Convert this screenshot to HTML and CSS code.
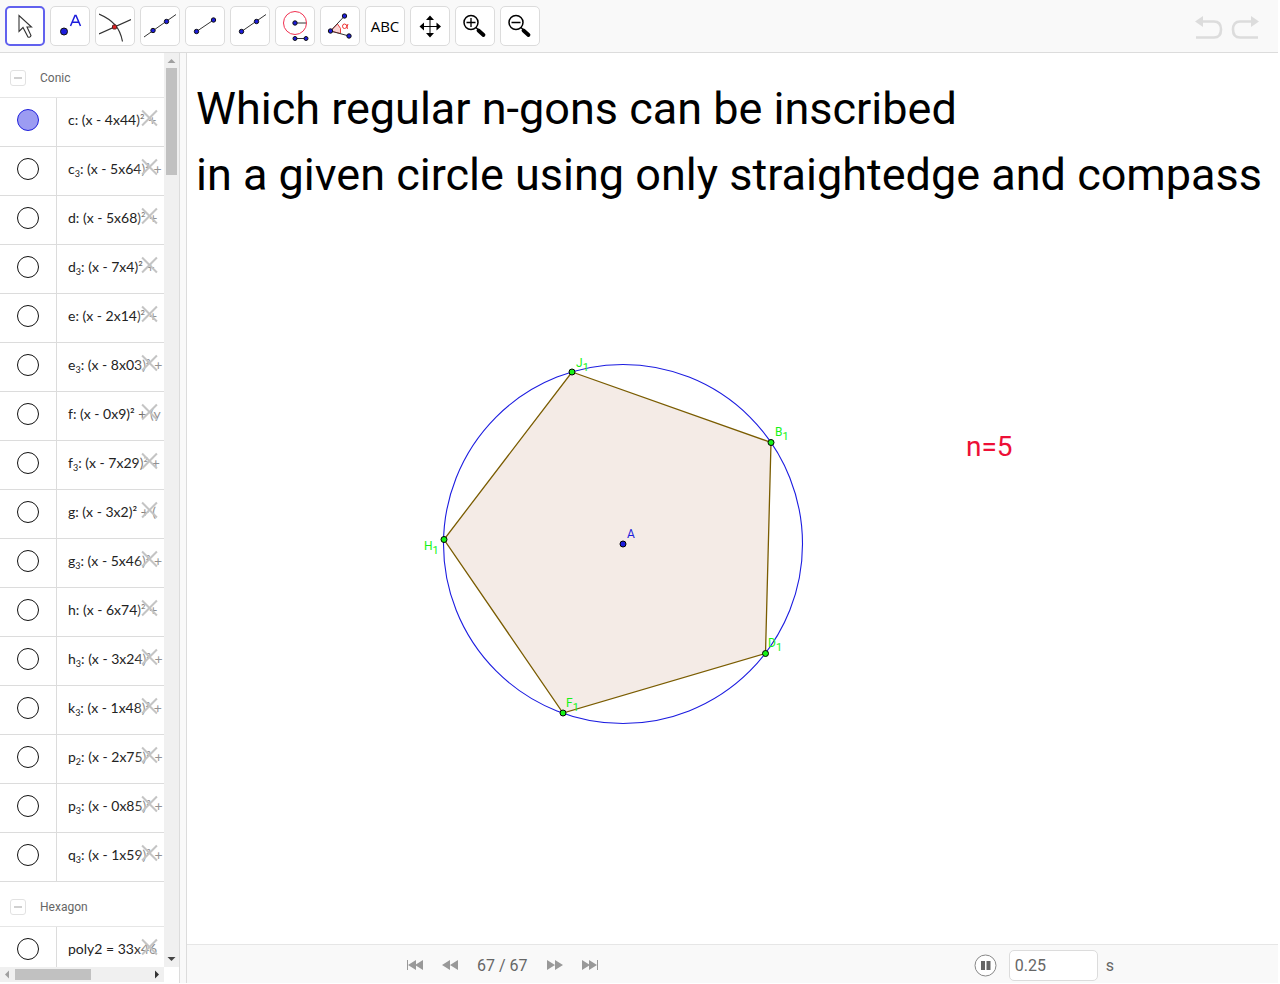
FILE: index.html
```html
<!DOCTYPE html>
<html lang="en">
<head>
<meta charset="utf-8">
<title>Regular n-gons</title>
<link rel="stylesheet" href="styles.css">
</head>
<body>
<div class="app">
  <header class="toolbar">
    <div class="tools">
      <button class="tool selected" aria-label="Move"><svg viewBox="0 0 32 32"><path d="M10 5.500v16l4-4 5 9.500q2 1 3-1.500l-4-8.500h4.500z" fill="#fff" stroke="#333" stroke-width="1.100"/></svg></button>
      <button class="tool" aria-label="Point"><svg viewBox="0 0 32 32"><path d="M16.500 16 21 5.500h1L26.500 16M18.200 12.300h6.600" fill="none" stroke="#1c1cdc" stroke-width="1.500"/><circle class="dot" cx="10" cy="21.500" r="3.500"/></svg></button>
      <button class="tool" aria-label="Intersect"><svg viewBox="0 0 32 32"><path class="ln" d="M0 24 32 9.500M0 4C14 10 21 18 23.500 31.500" stroke-width="1.200"/><rect x="13.500" y="15" width="4" height="4" rx="1" fill="#e02020" stroke="#522"/></svg></button>
      <button class="tool" aria-label="Line"><svg viewBox="0 0 32 32"><path class="ln" d="M0 27 32 4.500"/><circle class="dot" cx="9" cy="20.500" r="2.200"/><circle class="dot" cx="22.500" cy="11.500" r="2.200"/></svg></button>
      <button class="tool" aria-label="Segment"><svg viewBox="0 0 32 32"><path class="ln" d="M7.500 21.500 24.500 10"/><circle class="dot" cx="7.500" cy="21.500" r="2.200"/><circle class="dot" cx="24.500" cy="10" r="2.200"/></svg></button>
      <button class="tool" aria-label="Ray"><svg viewBox="0 0 32 32"><path class="ln" d="M7.500 21.500 32 4.500"/><circle class="dot" cx="7.500" cy="21.500" r="2.200"/><circle class="dot" cx="22.500" cy="11.500" r="2.200"/></svg></button>
      <button class="tool" aria-label="Compass"><svg viewBox="0 0 32 32"><circle cx="16" cy="13" r="11.500" fill="none" stroke="#f03050"/><path class="ln" d="M16 13h11M16 28.500h11"/><circle class="dot" cx="16" cy="13" r="2.200"/><circle class="dot" cx="16" cy="28.500" r="2"/><circle class="dot" cx="27" cy="28.500" r="2"/></svg></button>
      <button class="tool" aria-label="Angle"><svg viewBox="0 0 32 32"><path d="m6.500 21 7-7q4.500 4 3 9.500z" fill="#fbd5d5" stroke="#e44"/><path class="ln" d="M20.500 6 6.500 21l18.500 5"/><circle class="dot" cx="20.500" cy="6" r="2.200"/><circle class="dot" cx="6.500" cy="21" r="2.200"/><circle class="dot" cx="25" cy="26" r="2.200"/><path d="M24 14q-1 5-3.500 4.500-2 0-2-2.300 0-2.200 2-2.200 2.500 0 2.500 3 0 2 1 1.500" fill="none" stroke="#e33"/></svg></button>
      <button class="tool" aria-label="Text"><span class="abc">ABC</span></button>
      <button class="tool" aria-label="Move view"><svg viewBox="0 0 32 32"><path d="M16 8v17M8 16.500h17" stroke="#000"/><path d="m16 5.500 4 4.500h-8zM16 27.500l4-4.500h-8zM5.500 16.500l4.500-4v8zM27 16.500l-4.500-4v8z"/></svg></button>
      <button class="tool" aria-label="Zoom in"><svg viewBox="0 0 32 32"><circle cx="12" cy="12.500" r="7" fill="none" stroke="#000" stroke-width="1.500"/><path d="M7.500 12.500h9M12 8v9M17 17.500l3 3" fill="none" stroke="#000" stroke-width="1.300"/><path d="m19.500 20.500 5 4.500" stroke="#000" stroke-width="3.800" stroke-linecap="round"/></svg></button>
      <button class="tool" aria-label="Zoom out"><svg viewBox="0 0 32 32"><circle cx="12" cy="12.500" r="7" fill="none" stroke="#000" stroke-width="1.500"/><path d="M7.500 12.500h9M17 17.500l3 3" fill="none" stroke="#000" stroke-width="1.300"/><path d="m19.500 20.500 5 4.500" stroke="#000" stroke-width="3.800" stroke-linecap="round"/></svg></button>
    </div>
    <div class="history">
      <button class="plain" aria-label="Undo"><svg width="28" height="24" viewBox="0 0 28 24"><path d="M7 6.500h12q7 0 7 8t-7 8H1" fill="none" stroke="#dcdcdc" stroke-width="2.600"/><path d="M0 6.500 8 1v11z" fill="#dcdcdc"/></svg></button>
      <button class="plain" aria-label="Redo"><svg width="28" height="24" viewBox="0 0 28 24"><path d="M21 6.500H9q-7 0-7 8t7 8h18" fill="none" stroke="#dcdcdc" stroke-width="2.600"/><path d="M28 6.500 20 1v11z" fill="#dcdcdc"/></svg></button>
    </div>
  </header>

  <div class="workspace">
    <aside class="algebra">
      <div class="list">
        <h2 class="group"><button class="fold" aria-label="Collapse Conic"></button>Conic</h2>
        <ul class="rows">
          <li class="row"><button class="mark on" aria-label="Toggle c"></button><span class="formula">c: (x - 4x44)² +</span><button class="remove" aria-label="Delete c"></button></li>
          <li class="row"><button class="mark" aria-label="Toggle c3"></button><span class="formula">c<sub>3</sub>: (x - 5x64)² +</span><button class="remove" aria-label="Delete c3"></button></li>
          <li class="row"><button class="mark" aria-label="Toggle d"></button><span class="formula">d: (x - 5x68)² +</span><button class="remove" aria-label="Delete d"></button></li>
          <li class="row"><button class="mark" aria-label="Toggle d3"></button><span class="formula">d<sub>3</sub>: (x - 7x4)² +</span><button class="remove" aria-label="Delete d3"></button></li>
          <li class="row"><button class="mark" aria-label="Toggle e"></button><span class="formula">e: (x - 2x14)² +</span><button class="remove" aria-label="Delete e"></button></li>
          <li class="row"><button class="mark" aria-label="Toggle e3"></button><span class="formula">e<sub>3</sub>: (x - 8x03)² +</span><button class="remove" aria-label="Delete e3"></button></li>
          <li class="row"><button class="mark" aria-label="Toggle f"></button><span class="formula">f: (x - 0x9)² + (y</span><button class="remove" aria-label="Delete f"></button></li>
          <li class="row"><button class="mark" aria-label="Toggle f3"></button><span class="formula">f<sub>3</sub>: (x - 7x29)² +</span><button class="remove" aria-label="Delete f3"></button></li>
          <li class="row"><button class="mark" aria-label="Toggle g"></button><span class="formula">g: (x - 3x2)² + (</span><button class="remove" aria-label="Delete g"></button></li>
          <li class="row"><button class="mark" aria-label="Toggle g3"></button><span class="formula">g<sub>3</sub>: (x - 5x46)² +</span><button class="remove" aria-label="Delete g3"></button></li>
          <li class="row"><button class="mark" aria-label="Toggle h"></button><span class="formula">h: (x - 6x74)² +</span><button class="remove" aria-label="Delete h"></button></li>
          <li class="row"><button class="mark" aria-label="Toggle h3"></button><span class="formula">h<sub>3</sub>: (x - 3x24)² +</span><button class="remove" aria-label="Delete h3"></button></li>
          <li class="row"><button class="mark" aria-label="Toggle k3"></button><span class="formula">k<sub>3</sub>: (x - 1x48)² +</span><button class="remove" aria-label="Delete k3"></button></li>
          <li class="row"><button class="mark" aria-label="Toggle p2"></button><span class="formula">p<sub>2</sub>: (x - 2x75)² +</span><button class="remove" aria-label="Delete p2"></button></li>
          <li class="row"><button class="mark" aria-label="Toggle p3"></button><span class="formula">p<sub>3</sub>: (x - 0x85)² +</span><button class="remove" aria-label="Delete p3"></button></li>
          <li class="row"><button class="mark" aria-label="Toggle q3"></button><span class="formula">q<sub>3</sub>: (x - 1x59)² +</span><button class="remove" aria-label="Delete q3"></button></li>
        </ul>
        <h2 class="group"><button class="fold" aria-label="Collapse Hexagon"></button>Hexagon</h2>
        <ul class="rows">
          <li class="row"><button class="mark" aria-label="Toggle poly2"></button><span class="formula">poly2 = 33x46</span><button class="remove" aria-label="Delete poly2"></button></li>
        </ul>
      </div>
      <div class="vbar">
        <svg class="arrow" viewBox="0 0 15 15"><path d="M3.500 10 7.500 6l4 4z" fill="#a0a0a0"/></svg>
        <div class="vthumb"></div>
        <svg class="arrow last" viewBox="0 0 15 15"><path d="M3.500 5l4 4 4-4z" fill="#444"/></svg>
      </div>
      <div class="hbar">
        <svg class="arrow" viewBox="0 0 15 15"><path d="M9 3.500 5 7.500l4 4z" fill="#a0a0a0"/></svg>
        <div class="hthumb"></div>
        <svg class="arrow last" viewBox="0 0 15 15"><path d="M6 3.500l4 4-4 4z" fill="#333"/></svg>
      </div>
    </aside>
    <div class="splitter"></div>
    <main class="view">
      <div class="canvas">
        <svg class="drawing" aria-label="Regular pentagon inscribed in a circle">
          <circle cx="436" cy="491" r="179.500" fill="none" stroke="#1c1ce0" stroke-width="1.100"/>
          <path d="M385 319 584 389.500 578.500 600.500 376 660 257 486.500z" fill="#f4ebe6" stroke="#7a5c00" stroke-width="1.300"/>
          <g fill="#16f216" stroke="#000"><circle cx="385" cy="319" r="3"/><circle cx="584" cy="389.500" r="3"/><circle cx="578.500" cy="600.500" r="3"/><circle cx="376" cy="660" r="3"/><circle cx="257" cy="486.500" r="3"/></g>
          <circle cx="436" cy="491" r="3" fill="#1c1cdc" stroke="#000"/>
          <g class="label">
            <text x="389" y="314">J<tspan class="idx" dy="4">1</tspan></text>
            <text x="588" y="383">B<tspan class="idx" dy="4">1</tspan></text>
            <text x="581" y="594">D<tspan class="idx" dy="4">1</tspan></text>
            <text x="379" y="654">F<tspan class="idx" dy="4">1</tspan></text>
            <text x="237" y="497">H<tspan class="idx" dy="4">1</tspan></text>
            <text x="440" y="485" class="center">A</text>
          </g>
          <text x="779" y="403" class="count">n=5</text>
        </svg>
        <h1 class="question">Which regular n-gons can be inscribed<br>in a given circle using only straightedge and compass</h1>
      </div>
      <footer class="playback">
        <div class="steps">
          <button class="plain" aria-label="First step"><svg width="16" height="12" viewBox="0 0 16 12"><path d="M0 1h1v10H0zM9 1v10L1 6zM16 1v10L8 6z" fill="#999"/></svg></button>
          <button class="plain" aria-label="Previous step"><svg width="16" height="12" viewBox="0 0 16 12"><path d="M8 1v10L0 6zM16 1v10L8 6z" fill="#999"/></svg></button>
          <span class="position">67 / 67</span>
          <button class="plain" aria-label="Next step"><svg width="16" height="12" viewBox="0 0 16 12"><path d="M0 1v10l8-5zM8 1v10l8-5z" fill="#999"/></svg></button>
          <button class="plain" aria-label="Last step"><svg width="16" height="12" viewBox="0 0 16 12"><path d="M0 1v10l8-5zM7 1v10l8-5zM15 1h1v10h-1z" fill="#999"/></svg></button>
        </div>
        <div class="speed">
          <button class="plain" aria-label="Pause"><svg width="23" height="23" viewBox="0 0 23 23"><circle cx="11.500" cy="11.500" r="10.500" fill="#fff" stroke="#888"/><path d="M7 7h4v9H7zM12.500 7h4v9h-4z" fill="#666"/></svg></button>
          <input class="delay" id="delay" type="text" value="0.25">
          <label for="delay">s</label>
        </div>
      </footer>
    </main>
  </div>
</div>
</body>
</html>
```
FILE: styles.css
```css
* { box-sizing: border-box; }
body { margin: 0; background: #fff; font-family: Roboto, "Open Sans", sans-serif; }
button { font: inherit; padding: 0; margin: 0; border: 0; background: none; cursor: pointer; }
svg { display: block; }

.app { display: flex; flex-direction: column; height: 100vh; padding: 0 2px 1px 0; overflow: hidden; }

.toolbar { display: flex; justify-content: space-between; align-items: center; flex: none; padding: 6px 19px 6px 5px; background: #f9f9f9; border-bottom: 1px solid #dcdcdc; }
.tools { display: flex; gap: 5px; }
.tool { display: flex; align-items: center; justify-content: center; width: 40px; height: 40px; background: #fff; border: 1px solid #dcdcdc; border-radius: 5px; }
.tool.selected { border: 2px solid #6161ee; }
.tool svg { width: 32px; height: 32px; flex: none; }
.dot { fill: #1c1cdc; stroke: #111; }
.ln { fill: none; stroke: #333; }
.abc { font: 15px "Open Sans", sans-serif; color: #000; }
.history { display: flex; gap: 8px; padding-top: 2px; }

.workspace { display: flex; flex: 1; min-height: 0; }
.algebra { display: grid; grid-template: minmax(0, 1fr) 15px / 164px 15px; flex: none; padding-bottom: 1px; }
.list { overflow: hidden; }
.group { display: flex; align-items: center; gap: 14px; height: 45px; margin: 0; padding: 5px 0 0 10px; border-bottom: 1px solid #e6e6e6; font-size: 12px; font-weight: 400; color: #666; }
.fold { display: flex; align-items: center; justify-content: center; width: 16px; height: 16px; border: 1px solid #e2e2e2; border-radius: 3px; }
.fold::before { content: ""; width: 8px; height: 2px; background: #d0d0d0; }
.rows { margin: 0; padding: 0; list-style: none; }
.row { position: relative; display: flex; height: 49px; border-bottom: 1px solid #dcdcdc; overflow: hidden; }
.mark { display: flex; align-items: center; justify-content: center; flex: none; width: 57px; border-right: 1px solid #dcdcdc; padding-bottom: 4px; }
.mark::before { content: ""; width: 20px; height: 20px; border: 1px solid #111; border-radius: 50%; }
.mark.on::before { border-color: #2020dc; background: #9c9cf2; }
.formula { padding-left: 11px; font: 14px/43px Lato, "Open Sans", sans-serif; word-spacing: normal; color: #222; white-space: nowrap; }
.formula sub { font-size: 9px; line-height: 0; vertical-align: -3px; }
.remove { position: absolute; top: 0; right: 0; width: 28px; height: 48px; background: linear-gradient(90deg, rgba(255,255,255,0), rgba(255,255,255,.5) 30%); }
.remove::before, .remove::after { content: ""; position: absolute; top: 19px; left: 3px; width: 21px; height: 2px; background: #c4c4c4; transform: rotate(45deg); }
.remove::after { transform: rotate(-45deg); }
.vbar { display: flex; flex-direction: column; align-items: center; background: #f0f0f0; }
.arrow { width: 15px; height: 15px; flex: none; }
.vthumb { width: 11px; height: 107px; background: #c1c1c1; }
.vbar .last { margin-top: auto; }
.hbar { display: flex; align-items: center; background: #f0f0f0; }
.hthumb { width: 76px; height: 11px; background: #c1c1c1; }
.hbar .last { margin-left: auto; }
.splitter { flex: none; width: 8px; background: #f9f9f9; border: solid #dcdcdc; border-width: 0 1px; }

.view { display: flex; flex-direction: column; flex: 1; min-width: 0; }
.canvas { position: relative; flex: 1; min-height: 0; overflow: hidden; }
.drawing { position: absolute; inset: 0; width: 100%; height: 100%; }
.question { position: relative; margin: 0; padding: 23px 0 0 9px; font-size: 45px; line-height: 66px; font-weight: 400; color: #000; white-space: nowrap; }
.label { font-size: 12px; fill: #16f216; }
.idx { font-size: 11px; }
.center { fill: #1c1cdc; }
.count { font-size: 28px; fill: #ed1036; }

.playback { display: flex; justify-content: space-between; align-items: center; flex: none; height: 39px; padding: 2px 164px 0 220px; background: #f9f9f9; border-top: 1px solid #e6e6e6; font-size: 16px; color: #666; }
.steps { display: flex; align-items: center; gap: 19px; }
.speed { display: flex; align-items: center; gap: 8px; }
.delay { width: 89px; height: 31px; margin-left: 4px; padding: 0 5px; border: 1px solid #dcdcdc; border-radius: 5px; background: #fff; font: inherit; color: #666; }
```
